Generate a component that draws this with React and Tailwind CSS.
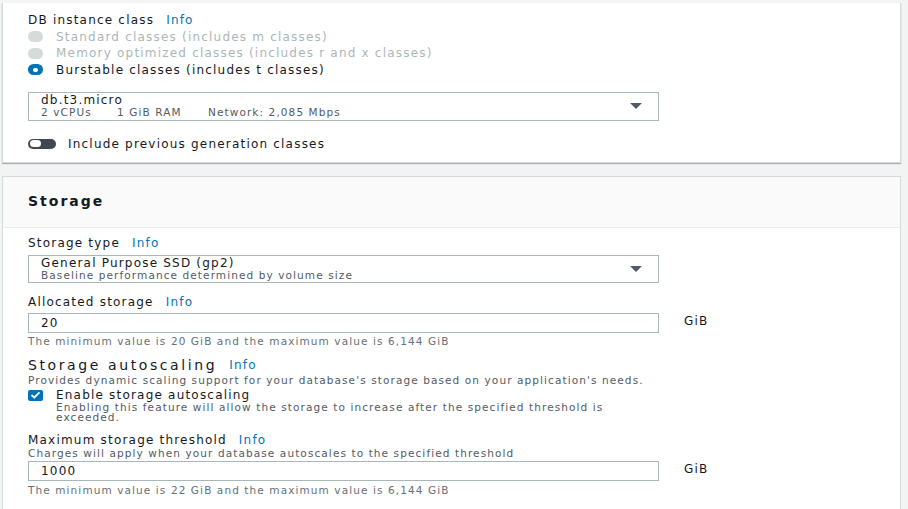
import React from "react";

const F = { fontFamily: '"DejaVu Sans", Verdana, sans-serif' };

function Info() {
  return <span className="ml-[12px] text-[#0073bb] text-[12px]">Info</span>;
}

function Caret() {
  return (
    <svg width="14" height="8" viewBox="0 0 14 8" className="shrink-0">
      <path d="M1 1 L13 1 L7 7 Z" fill="#545b64" />
    </svg>
  );
}

function Radio({ checked, disabled, children }) {
  return (
    <div className="flex items-center h-[16.5px]">
      <span
        className={
          "w-[15px] h-[11px] rounded-full shrink-0 flex items-center justify-center " +
          (checked ? "bg-[#0073bb]" : disabled ? "bg-[#d5dbdb]" : "border border-[#687078]")
        }
      >
        {checked && <span className="w-[5px] h-[4px] rounded-full bg-white" />}
      </span>
      <span className={"ml-[13px] text-[12px] " + (disabled ? "text-[#aab7b8]" : "text-[#16191f]")}>
        {children}
      </span>
    </div>
  );
}

export default function App() {
  return (
    <div style={F} className="w-[908px] h-[509px] overflow-hidden bg-[#f2f3f3] text-[#16191f] tracking-[1.2px]">
      <div className="ml-[2px] w-[899px] mt-[3px] bg-white border-x border-b border-[#d5dbdb] shadow-[0_1px_1px_rgba(0,28,36,0.3)]">
        <div className="pl-[25px] pt-[9px] pb-[11px]">
          <div className="flex items-center h-[16px] text-[12px]">
            DB instance class <Info />
          </div>
          <div className="mt-[0.5px]">
            <Radio disabled>Standard classes (includes m classes)</Radio>
            <Radio disabled>Memory optimized classes (includes r and x classes)</Radio>
            <Radio checked>Burstable classes (includes t classes)</Radio>
          </div>
          <div className="mt-[13.5px] w-[631px] h-[29px] border border-[#aab7b8] flex items-center pl-[12px] pr-[15px]">
            <div className="flex-1 leading-none">
              <div className="text-[12px] leading-[13px]">db.t3.micro</div>
              <div className="text-[10.5px] tracking-[1.1px] leading-[11px] text-[#545b64] flex">
                <span className="w-[76px]">2 vCPUs</span>
                <span className="w-[91px]">1 GiB RAM</span>
                <span>Network: 2,085 Mbps</span>
              </div>
            </div>
            <Caret />
          </div>
          <div className="mt-[16px] flex items-center h-[14px]">
            <span className="w-[28px] h-[10px] rounded-full bg-[#414750] relative shrink-0">
              <span className="absolute left-[2px] top-[1.5px] w-[11px] h-[7px] rounded-full bg-white" />
            </span>
            <span className="ml-[12px] text-[12px]">Include previous generation classes</span>
          </div>
        </div>
      </div>

      <div className="ml-[2px] w-[899px] mt-[13px] bg-white border border-[#d5dbdb]">
        <div className="h-[51px] bg-[#fafafa] border-b border-[#eaeded] flex items-center pl-[25px]">
          <span className="text-[14px] font-bold tracking-[2px]">Storage</span>
        </div>
        <div className="pl-[25px] pt-[7px]">
          <div className="flex items-center h-[16px] text-[12px]">
            Storage type <Info />
          </div>
          <div className="mt-[4px] w-[631px] h-[28px] border border-[#aab7b8] flex items-center pl-[12px] pr-[15px]">
            <div className="flex-1">
              <div className="text-[12px] leading-[13px]">General Purpose SSD (gp2)</div>
              <div className="text-[10.5px] tracking-[1.1px] leading-[11px] text-[#545b64]">Baseline performance determined by volume size</div>
            </div>
            <Caret />
          </div>
          <div className="mt-[11px] flex items-center h-[16px] text-[12px]">
            Allocated storage <Info />
          </div>
          <div className="mt-[3px] flex items-start">
            <div className="w-[631px] h-[20px] border border-[#aab7b8] flex items-center pl-[12px] text-[12px]">20</div>
            <span className="ml-[25px] -mt-[1px] text-[12px]">GiB</span>
          </div>
          <div className="mt-[1px] text-[10.5px] tracking-[1.1px] leading-[14px] text-[#687078]">
            The minimum value is 20 GiB and the maximum value is 6,144 GiB
          </div>
          <div className="mt-[9.5px] flex items-center h-[17px] leading-[17px]">
            <span className="text-[14px] tracking-[2.6px]">Storage autoscaling</span>
            <Info />
          </div>
          <div className="text-[10.5px] tracking-[1.1px] leading-[12px] text-[#545b64]">
            Provides dynamic scaling support for your database's storage based on your application's needs.
          </div>
          <div className="mt-[2.5px] flex items-start">
            <span className="mt-[1px] w-[15px] h-[11px] rounded-[2px] bg-[#0073bb] flex items-center justify-center shrink-0">
              <svg width="11" height="8" viewBox="0 0 11 8">
                <path d="M1.5 4 L4.3 6.5 L9.5 1.3" stroke="white" strokeWidth="1.8" fill="none" />
              </svg>
            </span>
            <div className="ml-[13px]">
              <div className="text-[12px] leading-[13px]">Enable storage autoscaling</div>
              <div className="w-[560px] text-[10.5px] tracking-[1.1px] leading-[10px] text-[#545b64]">
                Enabling this feature will allow the storage to increase after the specified threshold is exceeded.
              </div>
            </div>
          </div>
          <div className="mt-[11px] flex items-center h-[14px] text-[12px]">
            Maximum storage threshold <Info />
          </div>
          <div className="text-[10.5px] tracking-[1.1px] leading-[12px] text-[#545b64]">
            Charges will apply when your database autoscales to the specified threshold
          </div>
          <div className="mt-[2px] flex items-start">
            <div className="w-[631px] h-[20px] border border-[#aab7b8] flex items-center pl-[12px] text-[12px]">1000</div>
            <span className="ml-[25px] -mt-[1px] text-[12px]">GiB</span>
          </div>
          <div className="mt-[2px] text-[10.5px] tracking-[1.1px] leading-[14px] text-[#687078]">
            The minimum value is 22 GiB and the maximum value is 6,144 GiB
          </div>
          <div className="h-[20px]" />
        </div>
      </div>
    </div>
  );
}
